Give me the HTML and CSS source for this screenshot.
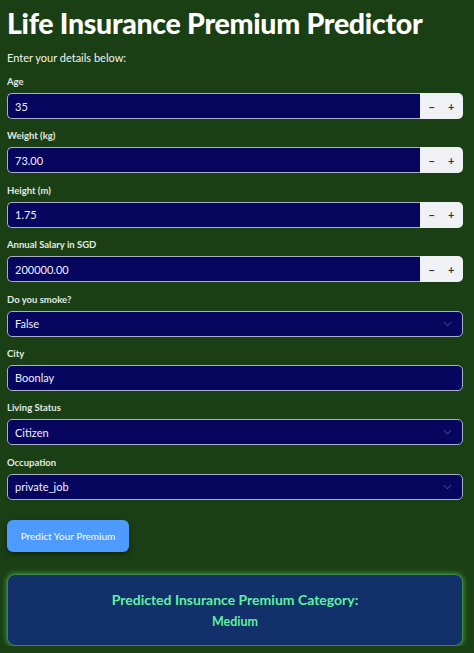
FILE: index.html
```html
<!DOCTYPE html>
<html>
<head>
<meta charset="utf-8">
<link rel="stylesheet" href="styles.css">
</head>
<body>
<main class="page">
  <h1 class="title">Life Insurance Premium Predictor</h1>
  <p class="intro">Enter your details below:</p>

  <div class="field">
    <label class="label">Age</label>
    <div class="number">
      <div class="box num-box">35</div>
      <div class="stepper"><span class="step">&minus;</span><span class="step">+</span></div>
    </div>
  </div>

  <div class="field">
    <label class="label">Weight (kg)</label>
    <div class="number">
      <div class="box num-box">73.00</div>
      <div class="stepper"><span class="step">&minus;</span><span class="step">+</span></div>
    </div>
  </div>

  <div class="field">
    <label class="label">Height (m)</label>
    <div class="number">
      <div class="box num-box">1.75</div>
      <div class="stepper"><span class="step">&minus;</span><span class="step">+</span></div>
    </div>
  </div>

  <div class="field">
    <label class="label">Annual Salary in SGD</label>
    <div class="number">
      <div class="box num-box">200000.00</div>
      <div class="stepper"><span class="step">&minus;</span><span class="step">+</span></div>
    </div>
  </div>

  <div class="field">
    <label class="label">Do you smoke?</label>
    <div class="box select">False
      <svg class="chev" viewBox="0 0 10 6" width="9" height="6"><path d="M1 1l4 4 4-4" fill="none" stroke="#3c4286" stroke-width="1.2"/></svg>
    </div>
  </div>

  <div class="field">
    <label class="label">City</label>
    <div class="box">Boonlay</div>
  </div>

  <div class="field">
    <label class="label">Living Status</label>
    <div class="box select">Citizen
      <svg class="chev" viewBox="0 0 10 6" width="9" height="6"><path d="M1 1l4 4 4-4" fill="none" stroke="#3c4286" stroke-width="1.2"/></svg>
    </div>
  </div>

  <div class="field">
    <label class="label">Occupation</label>
    <div class="box select">private_job
      <svg class="chev" viewBox="0 0 10 6" width="9" height="6"><path d="M1 1l4 4 4-4" fill="none" stroke="#3c4286" stroke-width="1.2"/></svg>
    </div>
  </div>

  <button class="predict">Predict Your Premium</button>

  <section class="result">
    <div class="result-title">Predicted Insurance Premium Category:</div>
    <div class="result-value">Medium</div>
  </section>
</main>
</body>
</html>
```

FILE: styles.css
```css
html, body {
  margin: 0;
  padding: 0;
  background: #1a3f15;
}
body {
  font-family: "Lato", "Open Sans", sans-serif;
  color: #f4f6f4;
}
.page {
  padding: 0 11px 0 7px;
  display: flex;
  flex-direction: column;
}
.title {
  margin: 0;
  padding-top: 5px;
  font-size: 28.5px;
  line-height: 36px;
  font-weight: 900;
  color: #ffffff;
  letter-spacing: -0.3px;
}
.intro {
  margin: 10px 0 0;
  font-size: 11px;
  line-height: 14px;
  color: #f2f4f2;
}
.field {
  display: flex;
  flex-direction: column;
  gap: 4px;
  margin-bottom: 10.4px;
}
.intro + .field {
  margin-top: 10px;
}
.label {
  font-size: 9.5px;
  line-height: 14px;
  font-weight: 700;
  color: #e2eae2;
}
.box {
  height: 26px;
  box-sizing: border-box;
  background: #06065e;
  border: 1px solid #a8afc6;
  border-radius: 5px;
  padding: 0 7px;
  display: flex;
  align-items: center;
  font-size: 11px;
  color: #f0f0ff;
}
.number {
  display: flex;
  height: 26px;
}
.num-box {
  flex: 1;
  border-radius: 5px 0 0 5px;
  border-right: none;
}
.stepper {
  width: 43px;
  background: #eff1f5;
  border-radius: 0 5px 5px 0;
  display: flex;
  align-items: center;
  justify-content: space-around;
  font-size: 11px;
  font-weight: 700;
  color: #333;
  padding: 0 2px;
  box-sizing: border-box;
}
.select {
  justify-content: space-between;
}
.chev {
  margin-right: 3px;
}
.predict {
  align-self: flex-start;
  margin-top: 10px;
  width: 122px;
  height: 32px;
  background: #4d9bff;
  border: none;
  border-radius: 6px;
  color: #ffffff;
  font-family: inherit;
  font-size: 10px;
  box-shadow: 0 2px 5px rgba(0, 0, 0, 0.45);
}
.result {
  margin-top: 22px;
  width: 456px;
  box-sizing: border-box;
  height: 72px;
  background: #12306a;
  border-radius: 8px;
  border: 1px solid #3e8a44;
  box-shadow: 0 0 5px 1px #3f8f3a;
  display: flex;
  flex-direction: column;
  align-items: center;
  justify-content: center;
  gap: 6px;
}
.result-title {
  font-size: 14px;
  font-weight: 700;
  color: #5ff0a0;
}
.result-value {
  font-size: 12.5px;
  font-weight: 700;
  color: #5ff0a0;
}
```
